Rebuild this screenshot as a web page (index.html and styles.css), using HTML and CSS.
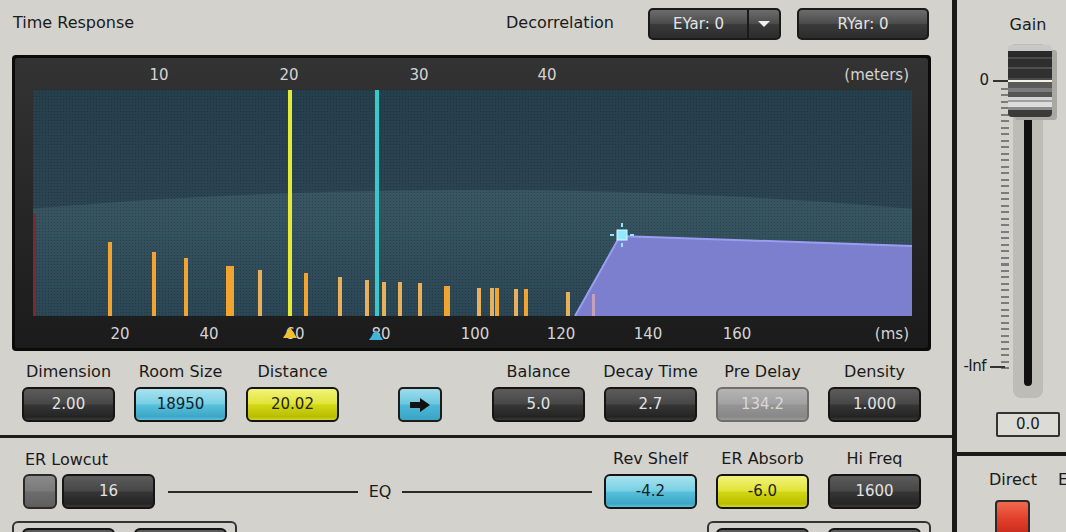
FILE: index.html
```html
<!DOCTYPE html>
<html lang="en">

<head>
    <meta charset="UTF-8">
    <meta name="viewport" content="width=device-width, initial-scale=1.0">
    <title>Reverb - Time Response</title>
    <link rel="stylesheet" href="styles.css">
</head>

<body>
    <div class="app">
        <div class="main">
            <!-- Time response block -->
            <section class="top">
                <div class="head">
                    <span class="title">Time Response</span>
                    <span class="decor">Decorrelation</span>
                    <div class="combo">
                        <span class="combo-text">EYar: 0</span>
                        <span class="combo-arrow"></span>
                    </div>
                    <div class="btn rvar">RYar: 0</div>
                </div>

                <div class="display">
                    <svg width="919" height="296" viewBox="12 55 919 296">
                        <defs>
                            <linearGradient id="frame" x1="0" y1="0" x2="0" y2="1">
                                <stop offset="0" stop-color="#333"/>
                                <stop offset="1" stop-color="#1b1b1b"/>
                            </linearGradient>
                            <linearGradient id="sky" x1="0" y1="0" x2="0" y2="1">
                                <stop offset="0" stop-color="#263f4c"/>
                                <stop offset="1" stop-color="#2f4a58"/>
                            </linearGradient>
                            <linearGradient id="floor" x1="0" y1="188" x2="0" y2="316" gradientUnits="userSpaceOnUse">
                                <stop offset="0" stop-color="#395662"/>
                                <stop offset="0.3" stop-color="#35525f"/>
                                <stop offset="1" stop-color="#2b4654"/>
                            </linearGradient>
                            <pattern id="dots" width="3" height="3" patternUnits="userSpaceOnUse">
                                <rect width="1" height="1" fill="rgba(0,0,0,0.22)"/>
                            </pattern>
                            <clipPath id="plot">
                                <rect x="33" y="90" width="879" height="226"/>
                            </clipPath>
                        </defs>

                        <rect x="12" y="55" width="919" height="296" rx="4" fill="#0b0b0b"/>
                        <rect x="15" y="58" width="913" height="290" rx="3" fill="url(#frame)"/>

                        <g clip-path="url(#plot)">
                            <rect x="33" y="90" width="879" height="226" fill="url(#sky)"/>
                            <ellipse cx="472" cy="560" rx="1400" ry="370" fill="url(#floor)"/>
                            <rect x="33" y="90" width="879" height="226" fill="url(#dots)"/>

                            <rect x="33" y="214" width="3" height="102" fill="#7a2a32"/>

                            <!-- early reflections -->
                            <g fill="#f2a431">
                                <rect x="108" y="242" width="4" height="74"/>
                                <rect x="152" y="252" width="4" height="64"/>
                                <rect x="184" y="258" width="4" height="58"/>
                                <rect x="226" y="266" width="8" height="50"/>
                                <rect x="258" y="270" width="4" height="46" fill="#e8b05a"/>
                                <rect x="304" y="273" width="4" height="43"/>
                                <rect x="338" y="277" width="4" height="39" fill="#e8b05a"/>
                                <rect x="365" y="280" width="4" height="36" fill="#e8b05a"/>
                                <rect x="382" y="282" width="4" height="34" fill="#e8b05a"/>
                                <rect x="398" y="282" width="4" height="34" fill="#e8b05a"/>
                                <rect x="418" y="283" width="4" height="33" fill="#e8b05a"/>
                                <rect x="444" y="286" width="6" height="30"/>
                                <rect x="477" y="288" width="4" height="28" fill="#e8b05a"/>
                                <rect x="490" y="288" width="4" height="28" fill="#e8b05a"/>
                                <rect x="495" y="288" width="4" height="28"/>
                                <rect x="514" y="289" width="4" height="27" fill="#e8b05a"/>
                                <rect x="524" y="289" width="4" height="27"/>
                                <rect x="566" y="292" width="4" height="24" fill="#e8b05a"/>
                            </g>

                            <!-- reverb tail -->
                            <polygon points="575,316 620,236 912,246 912,316" fill="#7c7fcd"/>
                            <polyline points="575,316 620,236 912,246" fill="none" stroke="#9b9df2" stroke-width="2"/>
                            <rect x="592" y="294" width="3" height="22" fill="#c4a0bc"/>

                            <rect x="288" y="90" width="4" height="226" fill="#e4ea36"/>
                            <rect x="375" y="90" width="4" height="226" fill="#38c9cc"/>
                        </g>

                        <!-- pre delay handle -->
                        <g stroke="#8fe6ff" stroke-width="2">
                            <line x1="622" y1="223" x2="622" y2="227"/>
                            <line x1="622" y1="243" x2="622" y2="247"/>
                            <line x1="610" y1="235" x2="614" y2="235"/>
                            <line x1="630" y1="235" x2="634" y2="235"/>
                        </g>
                        <rect x="617" y="230" width="10" height="10" fill="#8fe9ff" stroke="#d8f8ff" stroke-width="1"/>

                        <g font-family="DejaVu Sans, sans-serif" font-size="15" fill="#d4d4d4" text-anchor="middle">
                            <text x="159" y="80">10</text>
                            <text x="289" y="80">20</text>
                            <text x="419" y="80">30</text>
                            <text x="547" y="80">40</text>
                            <text x="909" y="80" text-anchor="end">(meters)</text>

                            <text x="120" y="339">20</text>
                            <text x="209" y="339">40</text>
                            <text x="295" y="339">60</text>
                            <text x="381" y="339">80</text>
                            <text x="475" y="339">100</text>
                            <text x="561" y="339">120</text>
                            <text x="648" y="339">140</text>
                            <text x="737" y="339">160</text>
                            <text x="909" y="339" text-anchor="end">(ms)</text>
                        </g>

                        <polygon points="283,338 290,327 297,338" fill="#f2c02c"/>
                        <polygon points="369,340 376,330 383,340" fill="#3fb6d8"/>
                    </svg>
                </div>

                <div class="params">
                    <div class="param">
                        <span class="label">Dimension</span>
                        <div class="val">2.00</div>
                    </div>
                    <div class="param">
                        <span class="label">Room Size</span>
                        <div class="val cyan">18950</div>
                    </div>
                    <div class="param">
                        <span class="label">Distance</span>
                        <div class="val yellow">20.02</div>
                    </div>
                    <div class="arrow-btn">
                        <svg width="22" height="14" viewBox="0 0 22 14">
                            <path d="M1 4 H11 V0 L21 7 L11 14 V10 H1 Z" fill="#111"/>
                        </svg>
                    </div>
                    <div class="param">
                        <span class="label">Balance</span>
                        <div class="val">5.0</div>
                    </div>
                    <div class="param">
                        <span class="label">Decay Time</span>
                        <div class="val">2.7</div>
                    </div>
                    <div class="param">
                        <span class="label">Pre Delay</span>
                        <div class="val off">134.2</div>
                    </div>
                    <div class="param">
                        <span class="label">Density</span>
                        <div class="val">1.000</div>
                    </div>
                </div>
            </section>

            <div class="hsep"></div>

            <!-- EQ block -->
            <section class="bottom">
                <div class="eq-row">
                    <div class="lowcut">
                        <span class="label">ER Lowcut</span>
                        <div class="lowcut-boxes">
                            <div class="val square"></div>
                            <div class="val">16</div>
                        </div>
                    </div>
                    <div class="eq-line">
                        <span class="rule"></span>
                        <span class="eq-text">EQ</span>
                        <span class="rule"></span>
                    </div>
                    <div class="param">
                        <span class="label">Rev Shelf</span>
                        <div class="val cyan">-4.2</div>
                    </div>
                    <div class="param">
                        <span class="label">ER Absorb</span>
                        <div class="val yellow">-6.0</div>
                    </div>
                    <div class="param">
                        <span class="label">Hi Freq</span>
                        <div class="val">1600</div>
                    </div>
                </div>
                <div class="bracket-row">
                    <div class="bracket">
                        <div class="val"></div>
                        <div class="val"></div>
                    </div>
                    <div class="bracket right">
                        <div class="val"></div>
                        <div class="val"></div>
                    </div>
                </div>
            </section>
        </div>

        <div class="vsep"></div>

        <!-- Gain column -->
        <aside class="side">
            <div class="gain">
                <span class="label">Gain</span>
                <div class="fader">
                    <div class="channel"></div>
                    <div class="ticks"></div>
                    <div class="track"></div>
                    <span class="mark mark-top">0</span>
                    <span class="mark mark-bottom">-Inf</span>
                    <div class="cap"></div>
                </div>
                <div class="gain-val">0.0</div>
            </div>
            <div class="side-sep"></div>
            <div class="outs">
                <div class="out">
                    <span class="label">Direct</span>
                    <div class="red-btn"></div>
                </div>
                <div class="out">
                    <span class="label">E</span>
                </div>
            </div>
        </aside>
    </div>
</body>

</html>
```

FILE: styles.css
```css
body {
    margin: 0;
    width: 1066px;
    height: 532px;
    overflow: hidden;
    background-color: #d3d2cc;
    font-family: "DejaVu Sans", sans-serif;
    font-size: 16px;
    color: #1a1a1a;
}

.app {
    display: flex;
    height: 532px;
    overflow: hidden;
}

.main {
    width: 952px;
    flex: none;
    display: flex;
    flex-direction: column;
    overflow: hidden;
}

.main > * {
    flex: none;
}

.label {
    line-height: 19px;
    white-space: nowrap;
}

/* header */
.top {
    height: 435px;
}

.head {
    display: flex;
    align-items: center;
    height: 32px;
    padding: 8px 23px 0 13px;
}

.title {
    margin-top: -4px;
}

.decor {
    margin-left: auto;
    margin-top: -4px;
    margin-right: 34px;
}

.combo,
.btn {
    box-sizing: border-box;
    height: 32px;
    border: 2px solid #1a1a1a;
    border-radius: 5px;
    background: linear-gradient(#6c6c6c, #4c4c4c 48%, #3a3a3a 52%, #2c2c2c);
    color: #e4e4e4;
    font-size: 15px;
    display: flex;
    align-items: center;
}

.combo {
    width: 133px;
}

.combo-text {
    width: 97px;
    text-align: center;
    border-right: 2px solid #1a1a1a;
    height: 28px;
    line-height: 28px;
}

.combo-arrow {
    flex: 1;
    display: flex;
    justify-content: center;
}

.combo-arrow::before {
    content: "";
    border-left: 6px solid transparent;
    border-right: 6px solid transparent;
    border-top: 6px solid #f0f0f0;
}

.btn {
    width: 132px;
    margin-left: 16px;
    justify-content: center;
}

/* display */
.display {
    margin: 15px 0 0 12px;
    width: 919px;
    height: 296px;
}

.display svg {
    display: block;
}

/* parameters */
.params {
    display: flex;
    align-items: flex-end;
    gap: 19px;
    margin: 11px 0 0 22px;
}

.param {
    width: 93px;
    display: flex;
    flex-direction: column;
    align-items: center;
    gap: 6px;
}

.val {
    box-sizing: border-box;
    width: 93px;
    height: 35px;
    border: 2px solid #151515;
    border-radius: 6px;
    background: linear-gradient(#5c5c5c, #474747 47%, #353535 53%, #242424 90%, #3a3a3a);
    color: #e2e2e2;
    font-size: 15px;
    line-height: 31px;
    text-align: center;
}

.val.cyan {
    background: linear-gradient(#a9e2ee, #79d0e4 47%, #56c0da 53%, #3ba6c6 90%, #5cc2dc);
    color: #13232a;
}

.val.yellow {
    background: linear-gradient(#f2f37a, #e0e43a 47%, #d2d612 53%, #b8bd00 90%, #d2d630);
    color: #222;
}

.val.off {
    border-color: #6e6e6e;
    background: linear-gradient(#b4b4b4, #a2a2a2 47%, #949494 53%, #888 90%, #9c9c9c);
    color: #d8d8d8;
}

.arrow-btn {
    box-sizing: border-box;
    width: 44px;
    height: 35px;
    margin: 0 31px 0 40px;
    border: 2px solid #1c1c1c;
    border-radius: 5px;
    background: linear-gradient(#9fdcec, #6cc8e0 47%, #4cb8d6 53%, #3aa4c4);
    display: flex;
    align-items: center;
    justify-content: center;
}

.hsep {
    height: 3px;
    background-color: #1e1e1e;
}

/* EQ section */
.bottom {
    height: 94px;
    padding-top: 11px;
    box-sizing: border-box;
    overflow: hidden;
}

.eq-row {
    display: flex;
    align-items: flex-end;
}

.lowcut {
    margin-left: 23px;
    display: flex;
    flex-direction: column;
    gap: 5px;
}

.lowcut .label {
    margin-left: 2px;
}

.lowcut-boxes {
    display: flex;
    gap: 5px;
}

.val.square {
    width: 34px;
    background: linear-gradient(#8a8a8a, #7a7a7a 47%, #6c6c6c 53%, #5e5e5e);
    border-color: #2a2a2a;
}

.eq-line {
    width: 424px;
    height: 35px;
    margin: 0 12px 0 13px;
    display: flex;
    align-items: center;
}

.rule {
    flex: 1;
    height: 2px;
    background-color: #2a2a2a;
}

.eq-text {
    margin: 0 11px;
    line-height: 19px;
}

.eq-row .param + .param {
    margin-left: 19px;
}

.bracket-row {
    display: flex;
    margin-top: 12px;
}

.bracket {
    display: flex;
    gap: 19px;
    margin-left: 12px;
    padding: 5px 8px 0 8px;
    border: 2px solid #333;
    border-bottom: none;
    border-radius: 6px 6px 0 0;
}

.bracket.right {
    margin-left: auto;
    margin-right: 21px;
    padding-left: 7px;
}

.vsep {
    width: 5px;
    flex: none;
    background-color: #1a1a1a;
}

/* gain column */
.side {
    width: 109px;
    flex: none;
    display: flex;
    flex-direction: column;
    overflow: hidden;
}

.gain {
    height: 452px;
    flex: none;
    box-sizing: border-box;
    padding: 15px 0 0 33px;
    display: flex;
    flex-direction: column;
    align-items: center;
}

.fader {
    position: relative;
    width: 64px;
    height: 356px;
    margin-top: 10px;
}

.channel {
    position: absolute;
    left: 17px;
    top: 0;
    width: 30px;
    height: 354px;
    border-radius: 0 0 8px 8px;
    background-color: #bdbcb6;
}

.ticks {
    position: absolute;
    left: 5px;
    top: 44px;
    width: 8px;
    height: 286px;
    background: repeating-linear-gradient(#7c7c7c 0 2px, transparent 2px 6.5px);
}

.track {
    position: absolute;
    left: 28px;
    top: 66px;
    width: 8px;
    height: 276px;
    border-radius: 0 0 4px 4px;
    background-color: #101010;
}

.mark {
    position: absolute;
    line-height: 19px;
    font-size: 15px;
    white-space: nowrap;
    display: flex;
    align-items: center;
}

.mark::after {
    content: "";
    width: 15px;
    height: 2px;
    margin-left: 4px;
    background-color: #333;
}

.mark-top {
    right: 52px;
    top: 27px;
}

.mark-bottom {
    right: 55px;
    top: 313px;
    letter-spacing: -0.5px;
}

.cap {
    position: absolute;
    left: 12px;
    top: 1px;
    width: 44px;
    height: 72px;
    border-radius: 4px;
    box-shadow: 6px 4px 0 -1px #a9a8a2;
    background: linear-gradient(#c8c8c8 0 6px, #2a2a2a 6px 12px, #4a4a4a 12px 14px, #2e2e2e 14px 22px, #505050 22px 24px, #303030 24px 33px, #4a4a4a 33px 35px, #f2f2e6 35px 37px, #5a5a5a 37px 43px, #7c7c7c 43px 47px, #555 47px 52px, #d4d4d4 52px 55px, #a0a0a0 55px 57px, #dcdcdc 57px 62px, #8a8a8a 62px 65px, #3a3a3a 65px);
}

.gain-val {
    box-sizing: border-box;
    width: 64px;
    height: 25px;
    margin-top: 12px;
    border: 2px solid #333;
    border-radius: 2px;
    background-color: #dcdbd5;
    font-size: 15px;
    line-height: 21px;
    text-align: center;
}

.side-sep {
    height: 4px;
    flex: none;
    background-color: #1a1a1a;
}

.outs {
    display: flex;
    gap: 21px;
    padding: 14px 0 0 32px;
    white-space: nowrap;
}

.out {
    display: flex;
    flex-direction: column;
    align-items: center;
    gap: 11px;
}

.red-btn {
    box-sizing: border-box;
    width: 35px;
    height: 36px;
    border: 2px solid #2a2a2a;
    border-radius: 4px;
    background: linear-gradient(#f06a50, #e2412c 50%, #c82a1c);
}
```
